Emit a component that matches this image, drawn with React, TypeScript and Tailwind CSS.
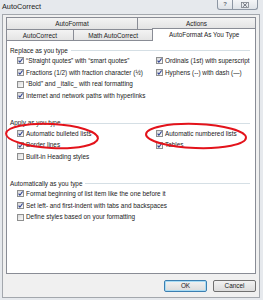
import React from "react";

type Item = { label: string; checked: boolean };

function Box({ checked }: { checked: boolean }) {
    return (
        <span className="relative flex h-[7px] w-[7px] shrink-0 items-center justify-center border border-[#8e8f8f] bg-linear-to-br from-[#dadada] to-[#fbfbfb]">
            {checked && (
                <svg viewBox="0 0 7 7" className="absolute left-[-1px] top-[-1px] h-[7px] w-[7px]">
                    <path d="M1.6 3.6 L2.9 5.2 L5.6 1.5" stroke="#2a3d8f" strokeWidth="1.1" fill="none" />
                </svg>
            )}
        </span>
    );
}

function Row({ item }: { item: Item }) {
    return (
        <div className="flex h-[11.7px] items-center gap-[2px] whitespace-nowrap">
            <Box checked={item.checked} />
            <span>{item.label}</span>
        </div>
    );
}

function Group({ title, left, right, className }: { title: string; left: Item[]; right?: Item[]; className?: string }) {
    return (
        <div className={className}>
            <div className="flex h-[9px] items-center gap-[3px] pl-[3px] pr-[5px]">
                <span className="whitespace-nowrap">{title}</span>
                <span className="h-px flex-1 bg-[#d5dfe5]" />
            </div>
            {right ? (
                <div className="grid grid-cols-[139px_1fr] pl-[10px]">
                    <div className="overflow-hidden">
                        {left.map((it) => (
                            <Row key={it.label} item={it} />
                        ))}
                    </div>
                    <div>
                        {right.map((it) => (
                            <Row key={it.label} item={it} />
                        ))}
                    </div>
                </div>
            ) : (
                <div className="pl-[10px]">
                    {left.map((it) => (
                        <Row key={it.label} item={it} />
                    ))}
                </div>
            )}
        </div>
    );
}

function Tab({ label, w, active, first }: { label: string; w: string; active?: boolean; first?: boolean }) {
    return (
        <div
            className={
                "flex items-center justify-center border-x border-t border-[#898c95] " +
                w +
                (first ? "" : " -ml-px") +
                (active
                    ? " relative z-10 -mt-px h-[13px] -mb-px bg-white"
                    : " h-[12px] bg-linear-to-b from-[#f3f3f3] to-[#e3e3e3]")
            }
        >
            {label}
        </div>
    );
}

export default function App() {
    return (
        <div className="relative h-[300px] w-[263px] overflow-hidden bg-[#e6e9ed] font-['Liberation_Sans',Arial,sans-serif] text-[6.4px] text-[#1b1b1b]">
            {/* title bar */}
            <div className="flex h-[14px] items-start justify-between">
                <span className="pl-[2px] pt-[2px] text-[7.3px] leading-[9px]">AutoCorrect</span>
                <div className="mr-[5px] flex">
                    <div className="flex h-[10px] w-[16px] items-center justify-center rounded-bl-[3px] border border-t-0 border-[#8d96a3] bg-linear-to-b from-[#f4f5f7] to-[#dfe3e8] text-[6px] font-bold text-[#6b6f78]">
                        ?
                    </div>
                    <div className="-ml-px flex h-[10px] w-[26px] items-center justify-center rounded-br-[3px] border border-t-0 border-[#8d96a3] bg-linear-to-b from-[#f4f5f7] to-[#dfe3e8]">
                        <svg viewBox="0 0 8 6" className="h-[6px] w-[8px]">
                            <rect x="0.5" y="0.5" width="7" height="5" fill="none" stroke="#7a7f88" strokeWidth="0.8" />
                            <path d="M2 1.2 L6 4.8 M6 1.2 L2 4.8" stroke="#6b6f78" strokeWidth="0.9" />
                        </svg>
                    </div>
                </div>
            </div>

            {/* client */}
            <div className="ml-[2px] flex h-[284px] w-[258px] flex-col border border-[#a3a7ad] bg-[#f0f0f0] px-[3px] pt-[2px]">
                <div className="flex">
                    <Tab label="AutoFormat" w="w-[132px]" first />
                    <Tab label="Actions" w="w-[119px]" />
                </div>
                <div className="flex h-[11px] items-start">
                    <Tab label="AutoCorrect" w="w-[68px]" first />
                    <Tab label="Math AutoCorrect" w="w-[81px]" />
                    <Tab label="AutoFormat As You Type" w="w-[104px]" active />
                </div>

                <div className="h-[234px] w-[250px] border border-[#898c95] bg-white pt-[5px]">
                    <Group
                        title="Replace as you type"
                        left={[
                            { label: "\u201cStraight quotes\u201d with \u201csmart quotes\u201d", checked: true },
                            { label: "Fractions (1/2) with fraction character (\u00bd)", checked: true },
                            { label: "\u201cBold\u201d and _italic_ with real formatting", checked: false },
                            { label: "Internet and network paths with hyperlinks", checked: true },
                        ]}
                        right={[
                            { label: "Ordinals (1st) with superscript", checked: true },
                            { label: "Hyphens (--) with dash (\u2014)", checked: true },
                        ]}
                    />
                    <Group
                        className="mt-[17px]"
                        title="Apply as you type"
                        left={[
                            { label: "Automatic bulleted lists", checked: true },
                            { label: "Border lines", checked: true },
                            { label: "Built-in Heading styles", checked: false },
                        ]}
                        right={[
                            { label: "Automatic numbered lists", checked: true },
                            { label: "Tables", checked: true },
                        ]}
                    />
                    <Group
                        className="mt-[16px]"
                        title="Automatically as you type"
                        left={[
                            { label: "Format beginning of list item like the one before it", checked: true },
                            { label: "Set left- and first-indent with tabs and backspaces", checked: true },
                            { label: "Define styles based on your formatting", checked: false },
                        ]}
                    />
                </div>

                <div className="mt-[6px] flex justify-end gap-[6px]">
                    <button className="flex h-[12px] w-[43px] items-center justify-center rounded-[2px] border border-[#3c7fb1] bg-linear-to-b from-[#f2f2f2] to-[#dcdcdc] shadow-[inset_0_0_0_1px_#a8dcf5]">
                        OK
                    </button>
                    <button className="flex h-[12px] w-[43px] items-center justify-center rounded-[2px] border border-[#707070] bg-linear-to-b from-[#f2f2f2] to-[#dcdcdc]">
                        Cancel
                    </button>
                </div>
            </div>

            {/* red annotation ellipses */}
            <svg className="pointer-events-none absolute left-0 top-0 h-[300px] w-[263px]" viewBox="0 0 263 300">
                <ellipse cx="52" cy="136" rx="46" ry="12" fill="none" stroke="#e3131b" strokeWidth="2" transform="rotate(3 52 136)" />
                <ellipse cx="196" cy="136" rx="50" ry="12" fill="none" stroke="#e3131b" strokeWidth="2" transform="rotate(2 196 136)" />
            </svg>
        </div>
    );
}
